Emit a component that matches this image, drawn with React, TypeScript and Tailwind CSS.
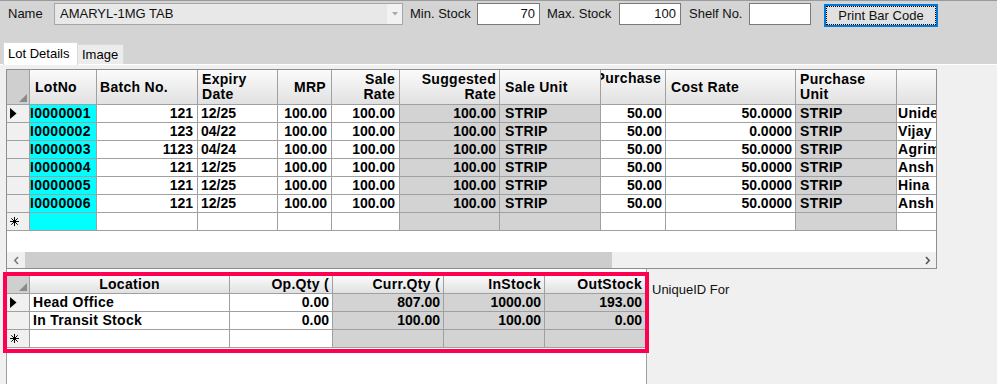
import React from 'react';

const FONT = "font-['Liberation_Sans',Arial,sans-serif]";
const GRAY = 'bg-[#d3d3d3]';

type Col = {
  w: string;
  head: string[];
  h: string;
  d: string;
  bg: string;
  last?: boolean;
};

const lotCols: Col[] = [
  { w: 'w-[67px]', head: ['LotNo'], h: 'justify-start items-center pl-[5px]', d: 'justify-start pl-0 tracking-[0.3px]', bg: 'bg-[#00ffff]' },
  { w: 'w-[101px]', head: ['Batch No.'], h: 'justify-start items-center pl-[3px]', d: 'justify-end pr-[4px]', bg: 'bg-white' },
  { w: 'w-[80px]', head: ['Expiry', 'Date'], h: 'justify-start items-center pl-[4px]', d: 'justify-start pl-[3px]', bg: 'bg-white' },
  { w: 'w-[54px]', head: ['MRP'], h: 'justify-end items-center pr-[5px]', d: 'justify-end pr-[4px]', bg: 'bg-white' },
  { w: 'w-[68px]', head: ['Sale', 'Rate'], h: 'justify-end items-center pr-[4px] text-right', d: 'justify-end pr-[4px]', bg: 'bg-white' },
  { w: 'w-[100px]', head: ['Suggested', 'Rate'], h: 'justify-end items-center pr-[3px] text-right', d: 'justify-end pr-[3px]', bg: GRAY },
  { w: 'w-[101px]', head: ['Sale Unit'], h: 'justify-start items-center pl-[5px]', d: 'justify-start pl-[5px] tracking-[0.3px]', bg: GRAY },
  { w: 'w-[65px]', head: ['Purchase'], h: 'justify-end items-start pt-[1px] pr-[4px]', d: 'justify-end pr-[3px]', bg: 'bg-white' },
  { w: 'w-[130px]', head: ['Cost Rate'], h: 'justify-start items-center pl-[5px]', d: 'justify-end pr-[3px]', bg: 'bg-white' },
  { w: 'w-[101px]', head: ['Purchase', 'Unit'], h: 'justify-start items-center pl-[4px]', d: 'justify-start pl-[4px] tracking-[0.3px]', bg: GRAY },
  { w: 'w-[39px]', head: [''], h: 'justify-start items-center', d: 'justify-start pl-[1px] tracking-[0.3px]', bg: 'bg-white', last: true },
];

const lots = [
  ['I0000001', '121', '12/25', '100.00', '100.00', '100.00', 'STRIP', '50.00', '50.0000', 'STRIP', 'Unidex'],
  ['I0000002', '123', '04/22', '100.00', '100.00', '100.00', 'STRIP', '50.00', '0.0000', 'STRIP', 'Vijay'],
  ['I0000003', '1123', '04/24', '100.00', '100.00', '100.00', 'STRIP', '50.00', '50.0000', 'STRIP', 'Agrim'],
  ['I0000004', '121', '12/25', '100.00', '100.00', '100.00', 'STRIP', '50.00', '50.0000', 'STRIP', 'Ansh'],
  ['I0000005', '121', '12/25', '100.00', '100.00', '100.00', 'STRIP', '50.00', '50.0000', 'STRIP', 'Hina'],
  ['I0000006', '121', '12/25', '100.00', '100.00', '100.00', 'STRIP', '50.00', '50.0000', 'STRIP', 'Ansh'],
];

const locCols: Col[] = [
  { w: 'w-[200px]', head: ['Location'], h: 'justify-center items-center', d: 'justify-start pl-[3px] tracking-[0.3px]', bg: 'bg-white' },
  { w: 'w-[103px]', head: ['Op.Qty ('], h: 'justify-end items-center pr-[3px]', d: 'justify-end pr-[3px]', bg: 'bg-white' },
  { w: 'w-[111px]', head: ['Curr.Qty ('], h: 'justify-end items-center pr-[3px]', d: 'justify-end pr-[3px]', bg: GRAY },
  { w: 'w-[101px]', head: ['InStock'], h: 'justify-end items-center pr-[3px]', d: 'justify-end pr-[3px]', bg: GRAY },
  { w: 'w-[100px]', head: ['OutStock'], h: 'justify-end items-center pr-[3px]', d: 'justify-end pr-[3px]', bg: GRAY, last: true },
];

const locs = [
  ['Head Office', '0.00', '807.00', '1000.00', '193.00'],
  ['In Transit Stock', '0.00', '100.00', '100.00', '0.00'],
];

function Corner() {
  return (
    <div className="w-[23px] h-full shrink-0 border-r border-[#a0a0a0] bg-[#cfcfcf] flex items-end justify-end pr-[2px] pb-[2px]">
      <svg width="8" height="8" viewBox="0 0 8 8" className="shrink-0">
        <polygon points="8,0 8,8 0,8" fill="#8a8a8a" />
      </svg>
    </div>
  );
}

function RowHead({ mark }: { mark?: 'current' | 'new' }) {
  return (
    <div className="w-[23px] h-full border-r border-[#a0a0a0] bg-[#f0f0f0] flex items-center pl-[2px] shrink-0">
      {mark === 'current' && (
        <svg width="7" height="11" viewBox="0 0 7 11" className="shrink-0 ml-[1px]">
          <polygon points="0,0 6.5,5.5 0,11" fill="#000" />
        </svg>
      )}
      {mark === 'new' && (
        <svg width="9" height="9" viewBox="0 0 9 9" stroke="#000" strokeWidth="1" className="shrink-0 ml-[1px]">
          <line x1="4.5" y1="0" x2="4.5" y2="9" />
          <line x1="0" y1="4.5" x2="9" y2="4.5" />
          <line x1="1.3" y1="1.3" x2="7.7" y2="7.7" />
          <line x1="7.7" y1="1.3" x2="1.3" y2="7.7" />
        </svg>
      )}
    </div>
  );
}

function HeaderRow({ cols, height }: { cols: Col[]; height: string }) {
  return (
    <div className={`flex ${height} border-b border-[#a0a0a0] tracking-[0.3px]`}>
      <Corner />
      {cols.map((c, i) => (
        <div
          key={i}
          className={`${c.w} ${c.h} h-full flex shrink-0 overflow-hidden bg-linear-to-b from-[#fbfbfb] to-[#e1e1e1] ${c.last ? '' : 'border-r border-[#a0a0a0]'}`}
        >
          <div className="shrink-0 whitespace-nowrap leading-[15px]">
            {c.head.map((l, j) => (
              <div key={j}>{l}</div>
            ))}
          </div>
        </div>
      ))}
    </div>
  );
}

function DataRow({ cols, values, mark }: { cols: Col[]; values: string[]; mark?: 'current' | 'new' }) {
  return (
    <div className="flex h-[18px] border-b border-[#a0a0a0]">
      <RowHead mark={mark} />
      {cols.map((c, i) => (
        <div
          key={i}
          className={`${c.w} ${c.bg} ${c.d} h-full flex items-center shrink-0 overflow-hidden whitespace-nowrap ${c.last ? '' : 'border-r border-[#a0a0a0]'}`}
        >
          {values[i]}
        </div>
      ))}
    </div>
  );
}

function Chevron({ dir, color }: { dir: 'left' | 'right'; color: string }) {
  return (
    <svg width="7" height="9" viewBox="0 0 7 9" fill="none" stroke={color} strokeWidth="1.6">
      {dir === 'left' ? <polyline points="5,1 1.8,4.5 5,8" /> : <polyline points="2,1 5.2,4.5 2,8" />}
    </svg>
  );
}

function Field({ w, value }: { w: string; value: string }) {
  return (
    <div className={`${w} h-[22px] border border-[#7a7a7a] bg-white flex items-center justify-end pr-[4px] text-[13px]`}>
      {value}
    </div>
  );
}

export default function App() {
  return (
    <div className={`${FONT} w-[997px] h-[384px] overflow-hidden bg-[#f0f0f0] text-black`}>
      {/* header panel */}
      <div className="h-[64px] bg-[#d4d4d4] border-t border-[#9a9a9a] pt-[2px]">
        <div className="flex items-start h-[22px] text-[13px] text-[#111]">
          <div className="ml-[8px] w-[46px] h-[22px] flex items-center">Name</div>
          <div className="w-[349px] h-[22px] border border-[#a6a6a6] bg-[#e8e8e8] flex items-center">
            <span className="flex-1 pl-[5px]">AMARYL-1MG TAB</span>
            <div className="w-[15px] h-full bg-[#f2f2f2] flex items-center justify-center">
              <svg width="6" height="4" viewBox="0 0 6 4">
                <polygon points="0,0 6,0 3,3.5" fill="#a8a8a8" />
              </svg>
            </div>
          </div>
          <div className="ml-[7px] w-[67px] h-[22px] flex items-center">Min. Stock</div>
          <Field w="w-[63px]" value="70" />
          <div className="ml-[7px] w-[72px] h-[22px] flex items-center">Max. Stock</div>
          <Field w="w-[62px]" value="100" />
          <div className="ml-[8px] w-[60px] h-[22px] flex items-center">Shelf No.</div>
          <Field w="w-[62px]" value="" />
          <button className="ml-[13px] mt-[1px] w-[114px] h-[23px] border-2 border-[#0078d7] bg-[#e1e1e1] p-0">
            <div className="w-full h-full border border-dotted border-black flex items-center justify-center text-[13px]">
              Print Bar Code
            </div>
          </button>
        </div>
        <div className="mt-[17px] h-[22px] flex items-end pl-[3px] text-[13px]">
          <div className="w-[75px] h-[23px] bg-white border border-b-0 border-[#d9d9d9] flex items-center pl-[4px] relative z-10 -mb-[1px]">
            Lot Details
          </div>
          <div className="w-[46px] h-[20px] bg-[#ececec] border border-b-0 border-l-0 border-[#d9d9d9] flex items-center pl-[4px]">
            Image
          </div>
        </div>
      </div>

      {/* tab page */}
      <div className="border-t border-white pt-[4px]">
        <div className="ml-[6px] w-[931px] h-[200px] border border-[#8e8e8e] bg-white flex flex-col text-[14px] font-bold">
          <HeaderRow cols={lotCols} height="h-[35px]" />
          {lots.map((r, i) => (
            <DataRow key={i} cols={lotCols} values={r} mark={i === 0 ? 'current' : undefined} />
          ))}
          <DataRow cols={lotCols} values={[]} mark="new" />
          <div className="h-[21px] bg-white" />
          <div className="h-[16px] flex">
            <div className="w-[18px] h-full bg-[#f0f0f0] flex items-center justify-center">
              <Chevron dir="left" color="#7a7a7a" />
            </div>
            <div className="w-[587px] h-full bg-[#cdcdcd]" />
            <div className="flex-1 h-full bg-[#f0f0f0]" />
            <div className="w-[17px] h-full bg-[#f0f0f0] flex items-center justify-center">
              <Chevron dir="right" color="#555" />
            </div>
          </div>
        </div>

        <div className="flex h-[115px]">
          <div className="ml-[6px] w-[641px] h-full border-l border-r border-[#a0a0a0] bg-white pt-[3px]">
            <div className="-ml-[4px] w-[646px] border-[4px] border-[#ff0050] bg-white text-[14px] font-bold relative">
              <HeaderRow cols={locCols} height="h-[18px]" />
              {locs.map((r, i) => (
                <DataRow key={i} cols={locCols} values={r} mark={i === 0 ? 'current' : undefined} />
              ))}
              <DataRow cols={locCols} values={[]} mark="new" />
              <div className="h-[1px]" />
            </div>
          </div>
          <div className="ml-[5px] mt-[13px] text-[13px] text-[#111] leading-[15px]">UniqueID For</div>
        </div>
      </div>
    </div>
  );
}
